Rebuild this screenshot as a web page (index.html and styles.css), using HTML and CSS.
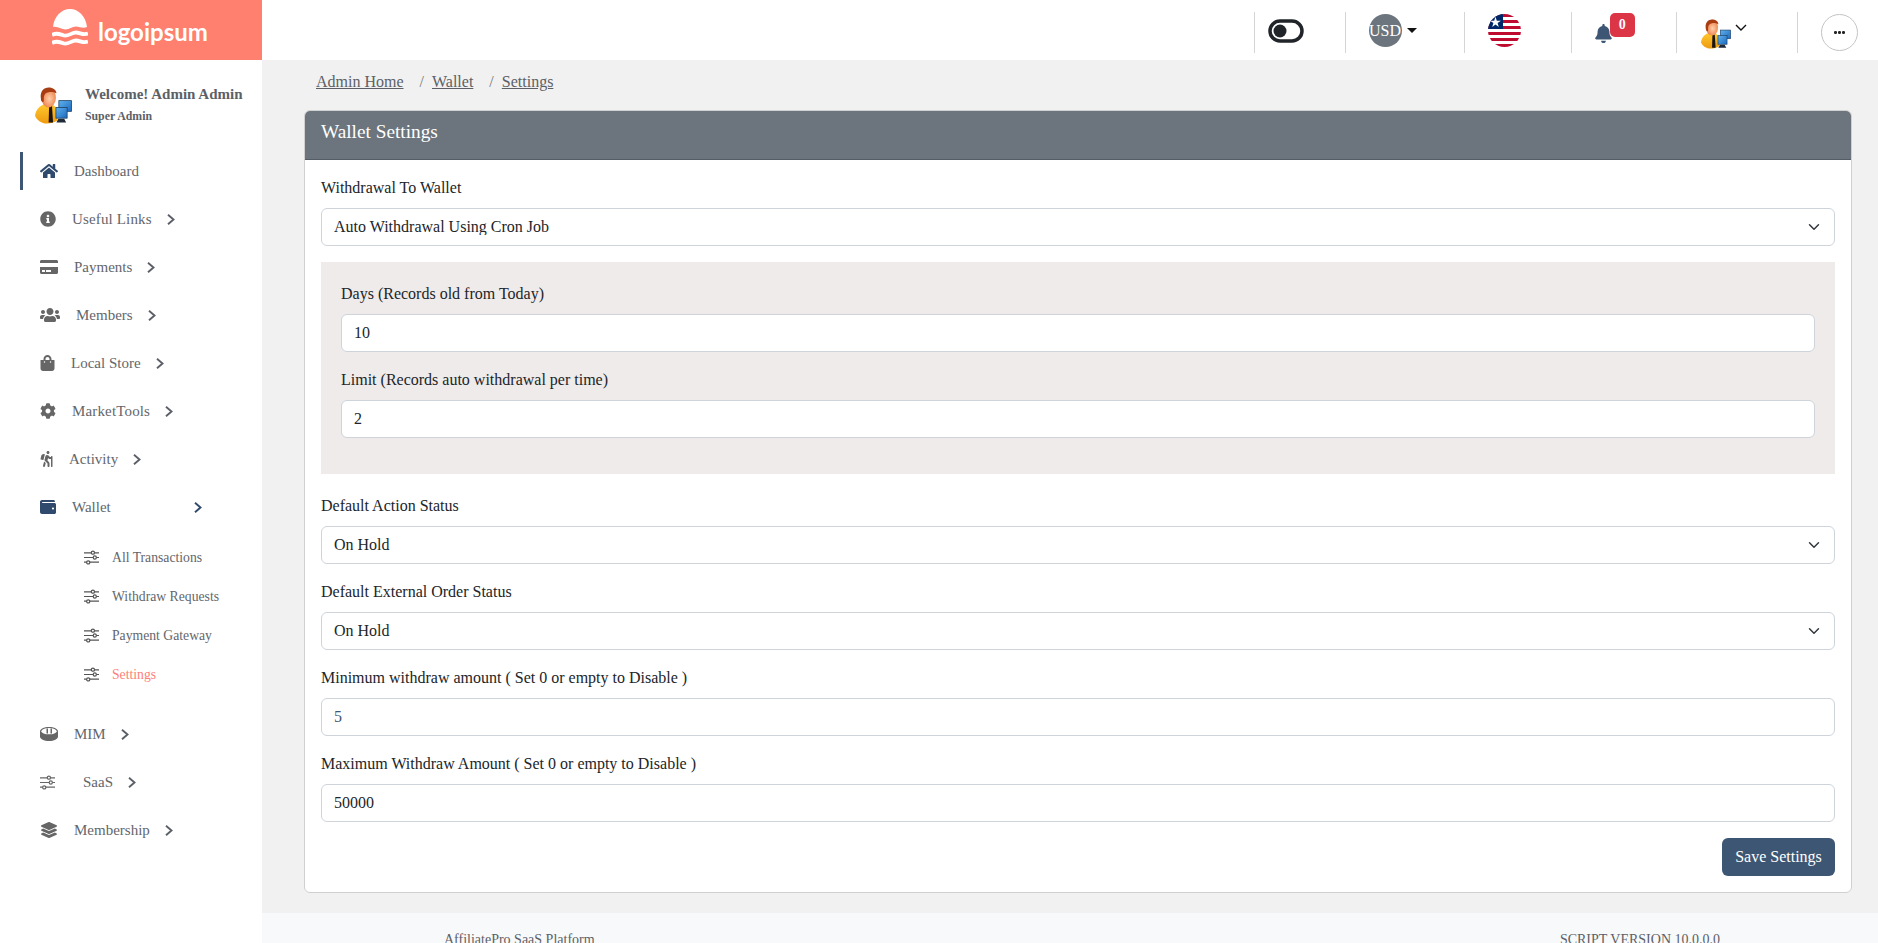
FILE: index.html
```html
<!DOCTYPE html>
<html lang="en">
<head>
<meta charset="utf-8">
<title>Wallet Settings</title>
<link rel="stylesheet" href="styles.css">
</head>
<body>
<svg class="defs" width="0" height="0" aria-hidden="true">
  <defs>
    <radialGradient id="face" cx="0.55" cy="0.55" r="0.6"><stop offset="0" stop-color="#ffd0ac"/><stop offset=".7" stop-color="#f0905c"/><stop offset="1" stop-color="#d9592c"/></radialGradient>
    <linearGradient id="shirt" x1="0" y1="0" x2="0" y2="1"><stop offset="0" stop-color="#ffc92e"/><stop offset="1" stop-color="#ee9a10"/></linearGradient>
    <linearGradient id="screen" x1="0" y1="0" x2="1" y2="1"><stop offset="0" stop-color="#5fb2ee"/><stop offset="1" stop-color="#1c68bd"/></linearGradient>
    <symbol id="avatar" viewBox="0 0 38 37">
      <path d="M0 29c1-7 5-10 10-12h7c4 2 6 5 6 10v7c-3 2-7 3-11 3-5 0-10-3-12-8z" fill="url(#shirt)"/>
      <path d="M14.500 19h3l1 17h-4.500z" fill="#1c1411"/>
      <ellipse cx="14" cy="10.500" rx="7.500" ry="10" fill="url(#face)"/>
      <path d="M6 11C5 4 9 0 14 0c4.500 0 8 2.500 8 6-3-1.500-6-1.500-8-1-3 .5-5 2-5 7 0 2 0 3-1 3-1.500-.5-2-2-2-4z" fill="#a83c12"/>
      <rect x="24.500" y="13.500" width="13" height="11" fill="url(#screen)" stroke="#1d3f63" stroke-width=".8"/>
      <rect x="21.500" y="20.500" width="11.500" height="11" fill="url(#screen)" stroke="#1d3f63" stroke-width=".8"/>
      <path d="M24 32h6l2 4h-10z" fill="#1e2a38"/>
    </symbol>
    <symbol id="chev" viewBox="0 0 8 11"><path d="M1 .8l5.500 4.700L1 10.200" fill="none" stroke="currentColor" stroke-width="1.900"/></symbol>
    <symbol id="sliders" viewBox="0 0 16 15">
      <g stroke="currentColor" stroke-width="1.300" fill="#fff">
        <path d="M0 2.500h16M0 7.500h16M0 12.500h16" fill="none"/>
        <circle cx="9.500" cy="2.300" r="1.700"/><circle cx="11.500" cy="7.500" r="1.700"/><circle cx="4.500" cy="12.700" r="1.700"/>
      </g>
    </symbol>
  </defs>
</svg>

<div class="app">
  <header class="header">
    <a class="logo" href="#">
      <svg class="logo-mark" viewBox="0 0 36 37">
        <path d="M1 18C2 7.500 9.500 0 18 0s16 7.500 17 18c-4 2-7.500-.5-11-.5-4 0-6.500 3-10.500 3-4.500 0-8-3.500-12.500-2.500z" fill="#fff"/>
        <path d="M0 26c5-3 8-.5 12 .5 4.500 1 7.500-3 12-3 4 0 7 3 12 1M0 34c5-3 8-.5 12 .5 4.500 1 7.500-3 12-3 4 0 7 3 12 1" fill="none" stroke="#fff" stroke-width="3.800"/>
      </svg>
      <span class="logo-text">logoipsum</span>
    </a>
    <div class="tools">
      <div class="tool tool-toggle">
        <svg class="i-toggle" viewBox="0 0 36 24"><rect x="2" y="2" width="32" height="20" rx="10" fill="#fff" stroke="#212529" stroke-width="3.500"/><circle cx="12" cy="12" r="6.500" fill="#212529"/></svg>
      </div>
      <div class="tool tool-usd">
        <span class="usd">USD</span><span class="caret"></span>
      </div>
      <div class="tool tool-flag">
        <svg class="flag" viewBox="0 0 33 33">
          <defs><clipPath id="round"><circle cx="16.500" cy="16.500" r="16.500"/></clipPath></defs>
          <g clip-path="url(#round)">
            <rect width="33" height="33" fill="#fff"/>
            <path d="M0 0h33v3H0zM0 6h33v3H0zM0 12h33v3H0zM0 18h33v3H0zM0 24h33v3H0zM0 30h33v3H0z" fill="#bf0a30"/>
            <rect width="15" height="15" fill="#002868"/>
            <path d="M7.500 2.800l1.300 3.900h4.100l-3.300 2.400 1.200 3.900-3.300-2.400-3.300 2.400 1.200-3.900-3.300-2.400h4.100z" fill="#fff"/>
          </g>
        </svg>
      </div>
      <div class="tool tool-bell">
        <svg class="i-bell" viewBox="0 0 448 512"><path d="M224 512c35.320 0 63.970-28.650 63.970-64H160.030c0 35.350 28.650 64 63.970 64zm215.390-149.710c-19.320-20.760-55.470-51.990-55.470-154.290 0-77.700-54.480-139.900-127.940-155.160V32c0-17.670-14.320-32-31.980-32s-31.980 14.330-31.980 32v20.840C118.560 68.100 64.080 130.300 64.080 208c0 102.300-36.150 133.530-55.470 154.290-6 6.450-8.660 14.160-8.610 21.710.11 16.400 12.980 32 32.100 32h383.800c19.120 0 32-15.600 32.100-32 .05-7.550-2.610-15.270-8.610-21.710z"/></svg>
        <span class="badge">0</span>
      </div>
      <div class="tool tool-user">
        <svg class="avatar-sm"><use href="#avatar"/></svg>
        <svg class="i-down" viewBox="0 0 12 7"><path d="M1 1l5 5 5-5" fill="none" stroke="#111" stroke-width="1.400"/></svg>
      </div>
      <div class="tool tool-more">
        <span class="more"><span></span><span></span><span></span></span>
      </div>
    </div>
  </header>

  <aside class="sidebar">
    <div class="profile">
      <svg class="avatar"><use href="#avatar"/></svg>
      <div class="profile-text">
        <div class="welcome">Welcome! Admin Admin</div>
        <div class="role">Super Admin</div>
      </div>
    </div>
    <nav class="nav">
      <a class="nav-item current" href="#">
        <svg class="ic ic-18 navy" viewBox="0 0 576 512"><path d="M280.370 148.260L96 300.110V464a16 16 0 0 0 16 16l112.060-.29a16 16 0 0 0 15.920-16V368a16 16 0 0 1 16-16h64a16 16 0 0 1 16 16v95.640a16 16 0 0 0 16 16.050L464 480a16 16 0 0 0 16-16V300L295.670 148.260a12.190 12.190 0 0 0-15.300 0zM571.600 251.470L488 182.560V44.050a12 12 0 0 0-12-12h-56a12 12 0 0 0-12 12v72.610L318.470 43a48 48 0 0 0-61 0L4.340 251.470a12 12 0 0 0-1.600 16.900l25.500 31A12 12 0 0 0 45.150 301l235.220-193.740a12.190 12.190 0 0 1 15.300 0L530.900 301a12 12 0 0 0 16.900-1.600l25.500-31a12 12 0 0 0-1.700-16.930z"/></svg>
        <span>Dashboard</span>
      </a>
      <a class="nav-item" href="#">
        <svg class="ic ic-16" viewBox="0 0 512 512"><path d="M256 8C119.043 8 8 119.083 8 256c0 136.997 111.043 248 248 248s248-111.003 248-248C504 119.083 392.957 8 256 8zm0 110c23.196 0 42 18.804 42 42s-18.804 42-42 42-42-18.804-42-42 18.804-42 42-42zm56 254c0 6.627-5.373 12-12 12h-88c-6.627 0-12-5.373-12-12v-24c0-6.627 5.373-12 12-12h12v-64h-12c-6.627 0-12-5.373-12-12v-24c0-6.627 5.373-12 12-12h64c6.627 0 12 5.373 12 12v100h12c6.627 0 12 5.373 12 12v24z"/></svg>
        <span class="wide">Useful Links</span><svg class="chev"><use href="#chev"/></svg>
      </a>
      <a class="nav-item" href="#">
        <svg class="ic ic-18" viewBox="0 0 576 512"><path d="M0 432c0 26.500 21.500 48 48 48h480c26.500 0 48-21.500 48-48V256H0v176zm192-68c0-6.600 5.400-12 12-12h136c6.600 0 12 5.400 12 12v40c0 6.600-5.400 12-12 12H204c-6.600 0-12-5.400-12-12v-40zm-128 0c0-6.600 5.400-12 12-12h72c6.600 0 12 5.400 12 12v40c0 6.600-5.400 12-12 12H76c-6.600 0-12-5.400-12-12v-40zM576 80v48H0V80c0-26.500 21.500-48 48-48h480c26.500 0 48 21.500 48 48z"/></svg>
        <span>Payments</span><svg class="chev"><use href="#chev"/></svg>
      </a>
      <a class="nav-item" href="#">
        <svg class="ic ic-20" viewBox="0 0 640 512"><path d="M96 224c35.300 0 64-28.700 64-64s-28.700-64-64-64-64 28.700-64 64 28.700 64 64 64zm448 0c35.300 0 64-28.700 64-64s-28.700-64-64-64-64 28.700-64 64 28.700 64 64 64zm32 32h-64c-17.600 0-33.500 7.100-45.100 18.600 40.300 22.100 68.900 62 75.100 109.400h66c17.700 0 32-14.300 32-32v-32c0-35.300-28.700-64-64-64zm-256 0c61.900 0 112-50.100 112-112S381.900 32 320 32 208 82.100 208 144s50.100 112 112 112zm76.800 32h-8.300c-20.800 10-43.900 16-68.500 16s-47.600-6-68.500-16h-8.300C179.600 288 128 339.600 128 403.200V432c0 26.500 21.500 48 48 48h288c26.500 0 48-21.500 48-48v-28.800c0-63.600-51.600-115.200-115.200-115.200zm-223.700-13.400C161.500 263.100 145.600 256 128 256H64c-35.300 0-64 28.700-64 64v32c0 17.700 14.300 32 32 32h65.900c6.300-47.400 34.900-87.300 75.200-109.400z"/></svg>
        <span>Members</span><svg class="chev"><use href="#chev"/></svg>
      </a>
      <a class="nav-item" href="#">
        <svg class="ic ic-14" viewBox="0 0 448 512"><path d="M352 160v-32C352 57.420 294.579 0 224 0 153.420 0 96 57.420 96 128v32H0v272c0 44.183 35.817 80 80 80h288c44.183 0 80-35.817 80-80V160h-96zm-192-32c0-35.290 28.710-64 64-64s64 28.710 64 64v32H160v-32zm160 120c-13.255 0-24-10.745-24-24s10.745-24 24-24 24 10.745 24 24-10.745 24-24 24zm-192 0c-13.255 0-24-10.745-24-24s10.745-24 24-24 24 10.745 24 24-10.745 24-24 24z"/></svg>
        <span>Local Store</span><svg class="chev"><use href="#chev"/></svg>
      </a>
      <a class="nav-item" href="#">
        <svg class="ic ic-16" viewBox="0 0 512 512"><path d="M487.400 315.700l-42.600-24.600c4.300-23.200 4.300-47 0-70.200l42.600-24.600c4.900-2.800 7.100-8.600 5.500-14-11.100-35.600-30-67.800-54.700-94.600-3.800-4.100-10-5.100-14.800-2.300L380.800 110c-17.900-15.400-38.500-27.300-60.800-35.100V25.800c0-5.600-3.900-10.500-9.400-11.700-36.700-8.200-74.300-7.800-109.200 0-5.500 1.200-9.400 6.100-9.400 11.700V75c-22.200 7.900-42.800 19.800-60.800 35.100L88.700 85.500c-4.900-2.800-11-1.900-14.800 2.300-24.700 26.700-43.600 58.900-54.700 94.600-1.700 5.400.6 11.200 5.500 14L67.300 221c-4.300 23.200-4.300 47 0 70.200l-42.600 24.600c-4.900 2.800-7.100 8.600-5.500 14 11.100 35.600 30 67.800 54.700 94.600 3.800 4.100 10 5.100 14.800 2.300l42.600-24.600c17.900 15.400 38.500 27.300 60.800 35.100v49.200c0 5.600 3.900 10.500 9.400 11.700 36.700 8.200 74.300 7.800 109.200 0 5.500-1.200 9.400-6.100 9.400-11.700v-49.200c22.200-7.900 42.800-19.800 60.800-35.100l42.600 24.600c4.900 2.800 11 1.900 14.800-2.300 24.700-26.700 43.600-58.900 54.700-94.600 1.500-5.500-.7-11.300-5.600-14.100zM256 336c-44.100 0-80-35.900-80-80s35.900-80 80-80 80 35.900 80 80-35.900 80-80 80z"/></svg>
        <span class="wide">MarketTools</span><svg class="chev"><use href="#chev"/></svg>
      </a>
      <a class="nav-item" href="#">
        <svg class="ic ic-12" viewBox="0 0 384 512"><path d="M80.950 472.230c-4.280 17.160 6.140 34.530 23.280 38.810 2.610.66 5.220.95 7.800.95 14.330 0 27.370-9.700 31.020-24.230l25.240-100.970-52.780-52.780-34.560 138.220zm14.890-196.120L137 117c2.190-8.420-3.140-16.950-11.920-19.060-43.880-10.520-88.350 15.070-99.320 57.170L.49 253.240c-2.190 8.420 3.140 16.950 11.920 19.060l63.560 15.250c8.790 2.100 17.680-3.020 19.870-11.440zM368 160h-16c-8.840 0-16 7.160-16 16v16h-34.750l-46.780-46.780C243.380 134.110 228.610 128 212.910 128c-27.020 0-50.470 18.300-57.030 44.520l-26.920 107.720a32.012 32.012 0 0 0 8.420 30.390L224 397.250V480c0 17.670 14.330 32 32 32s32-14.330 32-32v-82.750c0-17.090-6.660-33.160-18.750-45.250l-46.820-46.820c.15-.5.49-.89.62-1.410l19.890-79.570 22.430 22.430c6 6 14.140 9.380 22.620 9.380h48v240c0 8.840 7.160 16 16 16h16c8.840 0 16-7.160 16-16V176c.01-8.840-7.150-16-16-16zM240 96c26.510 0 48-21.490 48-48S266.510 0 240 0s-48 21.490-48 48 21.490 48 48 48z"/></svg>
        <span>Activity</span><svg class="chev"><use href="#chev"/></svg>
      </a>
      <a class="nav-item open" href="#">
        <svg class="ic ic-16 navy" viewBox="0 0 512 512"><path d="M461.200 128H80c-8.840 0-16-7.160-16-16s7.160-16 16-16h384c8.840 0 16-7.160 16-16 0-26.510-21.490-48-48-48H64C28.650 32 0 60.650 0 96v320c0 35.350 28.650 64 64 64h397.200c28.020 0 50.800-21.530 50.800-48V176c0-26.470-22.780-48-50.800-48zM416 336c-17.670 0-32-14.330-32-32s14.330-32 32-32 32 14.330 32 32-14.330 32-32 32z"/></svg>
        <span>Wallet</span><svg class="chev chev-wide navy"><use href="#chev"/></svg>
      </a>
      <div class="sub">
        <a class="sub-item" href="#"><svg class="sub-ic"><use href="#sliders"/></svg><span>All Transactions</span></a>
        <a class="sub-item" href="#"><svg class="sub-ic"><use href="#sliders"/></svg><span>Withdraw Requests</span></a>
        <a class="sub-item" href="#"><svg class="sub-ic"><use href="#sliders"/></svg><span>Payment Gateway</span></a>
        <a class="sub-item active" href="#"><svg class="sub-ic"><use href="#sliders"/></svg><span>Settings</span></a>
      </div>
      <a class="nav-item" href="#">
        <svg class="ic ic-18" viewBox="0 0 18 14"><path d="M9 0c5 0 9 1.800 9 4.500v5c0 2.500-4 4.500-9 4.500s-9-2-9-4.500v-5C0 1.800 4 0 9 0z"/><ellipse cx="9" cy="4.200" rx="7.600" ry="3.100" fill="#fff"/><path d="M6.500 1.500h1.500v5H6.500zM10.500 1.500H12v5h-1.500z"/></svg>
        <span>MIM</span><svg class="chev"><use href="#chev"/></svg>
      </a>
      <a class="nav-item saas" href="#">
        <svg class="ic ic-16 ic-line"><use href="#sliders"/></svg>
        <span>SaaS</span><svg class="chev"><use href="#chev"/></svg>
      </a>
      <a class="nav-item" href="#">
        <svg class="ic ic-18" viewBox="-32 0 576 512"><path d="M12.410 148.020l232.940 105.670c6.800 3.090 14.490 3.090 21.290 0l232.940-105.670c16.550-7.510 16.550-32.520 0-40.030L266.650 2.310a25.607 25.607 0 0 0-21.290 0L12.410 107.980c-16.550 7.510-16.550 32.530 0 40.040zm487.180 88.280l-58.090-26.330-161.640 73.270c-7.560 3.430-15.590 5.170-23.860 5.170s-16.290-1.740-23.860-5.170L70.510 209.970l-58.100 26.330c-16.550 7.500-16.550 32.500 0 40l232.940 105.590c6.800 3.080 14.490 3.080 21.290 0L499.590 276.300c16.550-7.500 16.550-32.500 0-40zm0 127.800l-57.870-26.230-161.860 73.370c-7.560 3.430-15.590 5.170-23.860 5.170s-16.290-1.740-23.860-5.170L70.290 337.870 12.410 364.100c-16.550 7.500-16.550 32.500 0 40l232.940 105.590c6.800 3.080 14.490 3.080 21.290 0L499.590 404.100c16.550-7.500 16.550-32.500 0-40z"/></svg>
        <span>Membership</span><svg class="chev"><use href="#chev"/></svg>
      </a>
    </nav>
  </aside>

  <main class="main">
    <div class="breadcrumb">
      <a href="#">Admin Home</a><span class="sep">/</span><a href="#">Wallet</a><span class="sep">/</span><a href="#">Settings</a>
    </div>
    <section class="card">
      <h1 class="card-title">Wallet Settings</h1>
      <form class="card-body">
        <div class="field">
          <label class="label" for="f1">Withdrawal To Wallet</label>
          <select class="control select" id="f1"><option>Auto Withdrawal Using Cron Job</option></select>
        </div>
        <div class="panel">
          <div class="field">
            <label class="label" for="f2">Days (Records old from Today)</label>
            <input class="control" id="f2" type="text" value="10">
          </div>
          <div class="field">
            <label class="label" for="f3">Limit (Records auto withdrawal per time)</label>
            <input class="control" id="f3" type="text" value="2">
          </div>
        </div>
        <div class="field">
          <label class="label" for="f4">Default Action Status</label>
          <select class="control select" id="f4"><option>On Hold</option></select>
        </div>
        <div class="field">
          <label class="label" for="f5">Default External Order Status</label>
          <select class="control select" id="f5"><option>On Hold</option></select>
        </div>
        <div class="field">
          <label class="label" for="f6">Minimum withdraw amount ( Set 0 or empty to Disable )</label>
          <input class="control blue" id="f6" type="text" value="5">
        </div>
        <div class="field">
          <label class="label" for="f7">Maximum Withdraw Amount ( Set 0 or empty to Disable )</label>
          <input class="control" id="f7" type="text" value="50000">
        </div>
        <div class="actions"><button class="btn" type="button">Save Settings</button></div>
      </form>
    </section>
    <footer class="footer">
      <span>AffiliatePro SaaS Platform</span>
      <span>SCRIPT VERSION 10.0.0.0</span>
    </footer>
  </main>
</div>
</body>
</html>
```
FILE: styles.css
```css
* { box-sizing: border-box; }
html, body { margin: 0; height: 100%; overflow: hidden; }
body { font-family: "Liberation Serif", "Times New Roman", serif; color: #212529; background: #f1f1f1; }
a { color: inherit; text-decoration: none; }
.defs { position: absolute; }

.app { display: grid; grid-template-columns: 262px 1fr; grid-template-rows: 60px 1fr; height: 100vh; }

.header { grid-column: 1 / -1; display: flex; align-items: center; background: #fff; }
.logo { width: 262px; height: 60px; flex: none; display: flex; align-items: center; padding-left: 52px; gap: 10px; background: #ff806e; }
.logo-mark { width: 36px; height: 37px; margin-bottom: 5px; }
.logo-text { font-family: "Lato", sans-serif; font-weight: 700; font-size: 24px; color: #fff; margin-top: 2px; }

.tools { margin-left: auto; display: flex; align-items: center; padding-right: 20px; padding-top: 5px; }
.tool { height: 41px; display: flex; align-items: center; border-left: 1px solid #d5d5d5; padding-left: 24px; }
.tool-toggle { padding-left: 13px; padding-right: 41px; }
.tool-usd { padding-left: 23px; padding-right: 47px; }
.tool-flag { padding-left: 23px; padding-right: 50px; }
.tool-bell { padding-left: 23px; padding-right: 41px; }
.tool-user { padding-left: 24px; padding-right: 49px; }
.tool-more { padding-left: 23px; }

.i-toggle { width: 36px; height: 24px; margin-bottom: 3px; }
.usd { width: 33px; height: 33px; border-radius: 50%; background: #6c757d; color: #fff; font-size: 16px; display: flex; align-items: center; justify-content: center; margin-bottom: 4px; }
.caret { margin-left: 5px; width: 0; height: 0; border: 5px solid transparent; border-top: 5px solid #111; border-bottom: 0; margin-bottom: 4px; }
.flag { width: 33px; height: 33px; margin-bottom: 4px; }
.tool-bell { align-items: flex-start; }
.i-bell { width: 17px; height: 19px; fill: #3d5673; margin-top: 12px; }
.badge { margin: 1px 0 0 -2px; width: 25.500px; height: 24px; border-radius: 5px; background: #dc3545; color: #fff; font-size: 14px; font-weight: 700; display: flex; align-items: center; justify-content: center; }
.avatar-sm { width: 30px; height: 30px; margin-top: 2px; }
.i-down { width: 12px; height: 7px; margin: 0 1px 10px 4px; }
.more { width: 37px; height: 37px; border: 1px solid #c4c4c4; border-radius: 50%; display: flex; align-items: center; justify-content: center; gap: 1.500px; }
.more span { width: 2.500px; height: 2.500px; border-radius: 50%; background: #222; }

.sidebar { background: #fff; padding-top: 27px; overflow: hidden; }
.profile { display: flex; align-items: center; padding-left: 35px; gap: 13px; height: 37px; }
.avatar { width: 37px; height: 37px; flex: none; }
.welcome { font-size: 15px; font-weight: 700; color: #5c6066; line-height: 20px; margin-top: -4px; }
.role { font-size: 11.800px; font-weight: 700; color: #5c6066; line-height: 16px; margin-top: 4px; }

.nav { margin-top: 23px; padding-left: 20px; display: flex; flex-direction: column; }
.nav-item { height: 48px; display: flex; align-items: center; padding-left: 20px; font-size: 15px; color: #63666b; }
.nav-item > span { margin-left: 16px; }
.nav-item > .wide { letter-spacing: .15px; }
.nav-item.current { height: 38px; margin: 5px 0; box-shadow: inset 3px 0 0 #3d5673; }
.ic { fill: #666; flex: none; height: 16px; }
.ic-12 { width: 13px; }
.ic-14 { width: 15px; }
.ic-16 { width: 16px; }
.ic-18 { width: 18px; }
.ic-20 { width: 20px; }
.ic-line { color: #666; width: 15px; height: 15px; }
.navy { fill: #2f4a6d; color: #2f4a6d; }
.chev { width: 8px; height: 11px; margin-left: 15px; color: #5b6068; flex: none; }
.chev.navy { color: #2f4a6d; }
.chev-wide { margin-left: 83px; }
.saas > span { margin-left: 28px; }

.sub { padding: 7px 0 16px 64px; display: flex; flex-direction: column; }
.sub-item { height: 39px; display: flex; align-items: center; gap: 13px; font-size: 13.700px; color: #63666b; }
.sub-ic { width: 15px; height: 15px; color: #555; flex: none; }
.sub-item.active { color: #ff7f78; }

.main { display: flex; flex-direction: column; min-width: 0; overflow: hidden; }
.breadcrumb { flex: none; padding: 12px 0 0 54px; height: 49.500px; font-size: 16px; line-height: 20px; color: #5c6066; }
.breadcrumb a { text-decoration: underline; }
.sep { margin: 0 8px 0 16px; color: #777; }

.card { margin: 0 26px 0 42px; background: #fff; border: 1px solid #d0d0d0; border-radius: 6px; height: 783px; flex: none; overflow: hidden; }
.card-title { margin: 0; height: 49px; padding: 0 16px; background: #6c757d; border-bottom: 1px solid #565c63; color: #fff; font-size: 19.300px; font-weight: 400; line-height: 42px; }
.card-body { padding: 17px 16px 0; display: flex; flex-direction: column; }
.field { display: flex; flex-direction: column; margin-bottom: 17px; flex: none; }
.label { font-size: 16px; line-height: 21px; margin-bottom: 10px; color: #212529; }
.control { width: 100%; height: 38px; padding: 0 12px; border: 1px solid #ced4da; border-radius: 6px; background: #fff; font: inherit; font-size: 16px; color: #212529; outline: none; }
.control.blue { color: #3d5673; }
.select { appearance: none; -webkit-appearance: none; background: #fff url("data:image/svg+xml,%3csvg xmlns='http://www.w3.org/2000/svg' viewBox='0 0 16 16'%3e%3cpath fill='none' stroke='%23343a40' stroke-linecap='round' stroke-linejoin='round' stroke-width='2' d='M2 5l6 6 6-6'/%3e%3c/svg%3e") no-repeat right 12px center / 16px 12px; }
.field:first-child { margin-bottom: 16px; }
.panel .field:first-child { margin-bottom: 17.500px; }
.panel { background: #efebea; padding: 21px 20px 0; height: 212px; margin-bottom: 21px; flex: none; }
.actions { display: flex; justify-content: flex-end; margin-top: -1px; }
.btn { height: 38px; width: 113px; padding: 0; border: 0; border-radius: 6px; background: #3d5673; color: #fff; font: inherit; font-size: 16px; }

.footer { margin-top: 20px; flex: none; height: 60px; background: #f8f9fa; padding: 17px 158px 0 182px; display: flex; justify-content: space-between; font-size: 14px; line-height: 20px; color: #5c6066; }
```
